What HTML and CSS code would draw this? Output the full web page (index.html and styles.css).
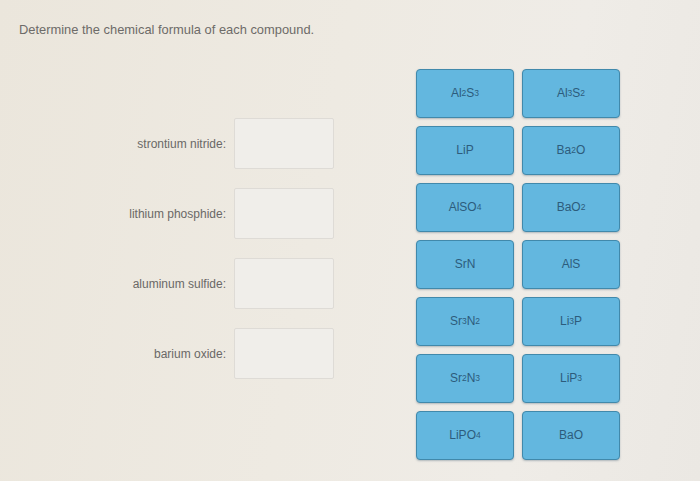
FILE: index.html
```html
<!DOCTYPE html>
<html>
<head>
<meta charset="utf-8">
<link rel="stylesheet" href="styles.css">
</head>
<body>
<div class="page">
  <p class="title">Determine the chemical formula of each compound.</p>
  <div class="main">
    <div class="targets">
      <div class="row"><span class="label">strontium nitride:</span><div class="drop"></div></div>
      <div class="row"><span class="label">lithium phosphide:</span><div class="drop"></div></div>
      <div class="row"><span class="label">aluminum sulfide:</span><div class="drop"></div></div>
      <div class="row"><span class="label">barium oxide:</span><div class="drop"></div></div>
    </div>
    <div class="bank">
      <div class="tile">Al<sub>2</sub>S<sub>3</sub></div>
      <div class="tile">Al<sub>3</sub>S<sub>2</sub></div>
      <div class="tile">LiP</div>
      <div class="tile">Ba<sub>2</sub>O</div>
      <div class="tile">AlSO<sub>4</sub></div>
      <div class="tile">BaO<sub>2</sub></div>
      <div class="tile">SrN</div>
      <div class="tile">AlS</div>
      <div class="tile">Sr<sub>3</sub>N<sub>2</sub></div>
      <div class="tile">Li<sub>3</sub>P</div>
      <div class="tile">Sr<sub>2</sub>N<sub>3</sub></div>
      <div class="tile">LiP<sub>3</sub></div>
      <div class="tile">LiPO<sub>4</sub></div>
      <div class="tile">BaO</div>
    </div>
  </div>
</div>
</body>
</html>
```

FILE: styles.css
```css
html, body {
  margin: 0;
  padding: 0;
}
body {
  width: 700px;
  height: 481px;
  overflow: hidden;
  background: linear-gradient(100deg, #ebe6dc 0%, #eeeae2 45%, #efece7 75%, #ebe8e3 100%);
  font-family: "Liberation Sans", Arial, sans-serif;
}
.page {
  padding: 21px 0 0 19px;
}
.title {
  margin: 0;
  font-size: 12.9px;
  color: #6d6b68;
  line-height: 18px;
}
.main {
  display: flex;
  margin-top: 30px;
}
.targets {
  width: 315px;
  padding-top: 49px;
  display: flex;
  flex-direction: column;
  gap: 19px;
}
.row {
  display: flex;
  justify-content: flex-end;
  align-items: center;
  gap: 8px;
}
.label {
  font-size: 12px;
  color: #6a6866;
}
.drop {
  width: 98px;
  height: 49px;
  border: 1px solid #dedbd6;
  border-radius: 2px;
  background: #f0eeea;
}
.bank {
  margin-left: 82px;
  display: grid;
  grid-template-columns: 98px 98px;
  grid-auto-rows: 49px;
  column-gap: 8px;
  row-gap: 8px;
}
.tile {
  box-sizing: border-box;
  background: #63b7df;
  border: 1px solid #4189ab;
  border-radius: 4px;
  box-shadow: 0 1px 2px rgba(60, 90, 110, 0.35);
  display: flex;
  align-items: center;
  justify-content: center;
  font-size: 12px;
  color: #2d5c7c;
  padding-bottom: 2px;
}
.tile sub {
  font-size: 8.5px;
  vertical-align: -1px;
  line-height: 0;
}
```
